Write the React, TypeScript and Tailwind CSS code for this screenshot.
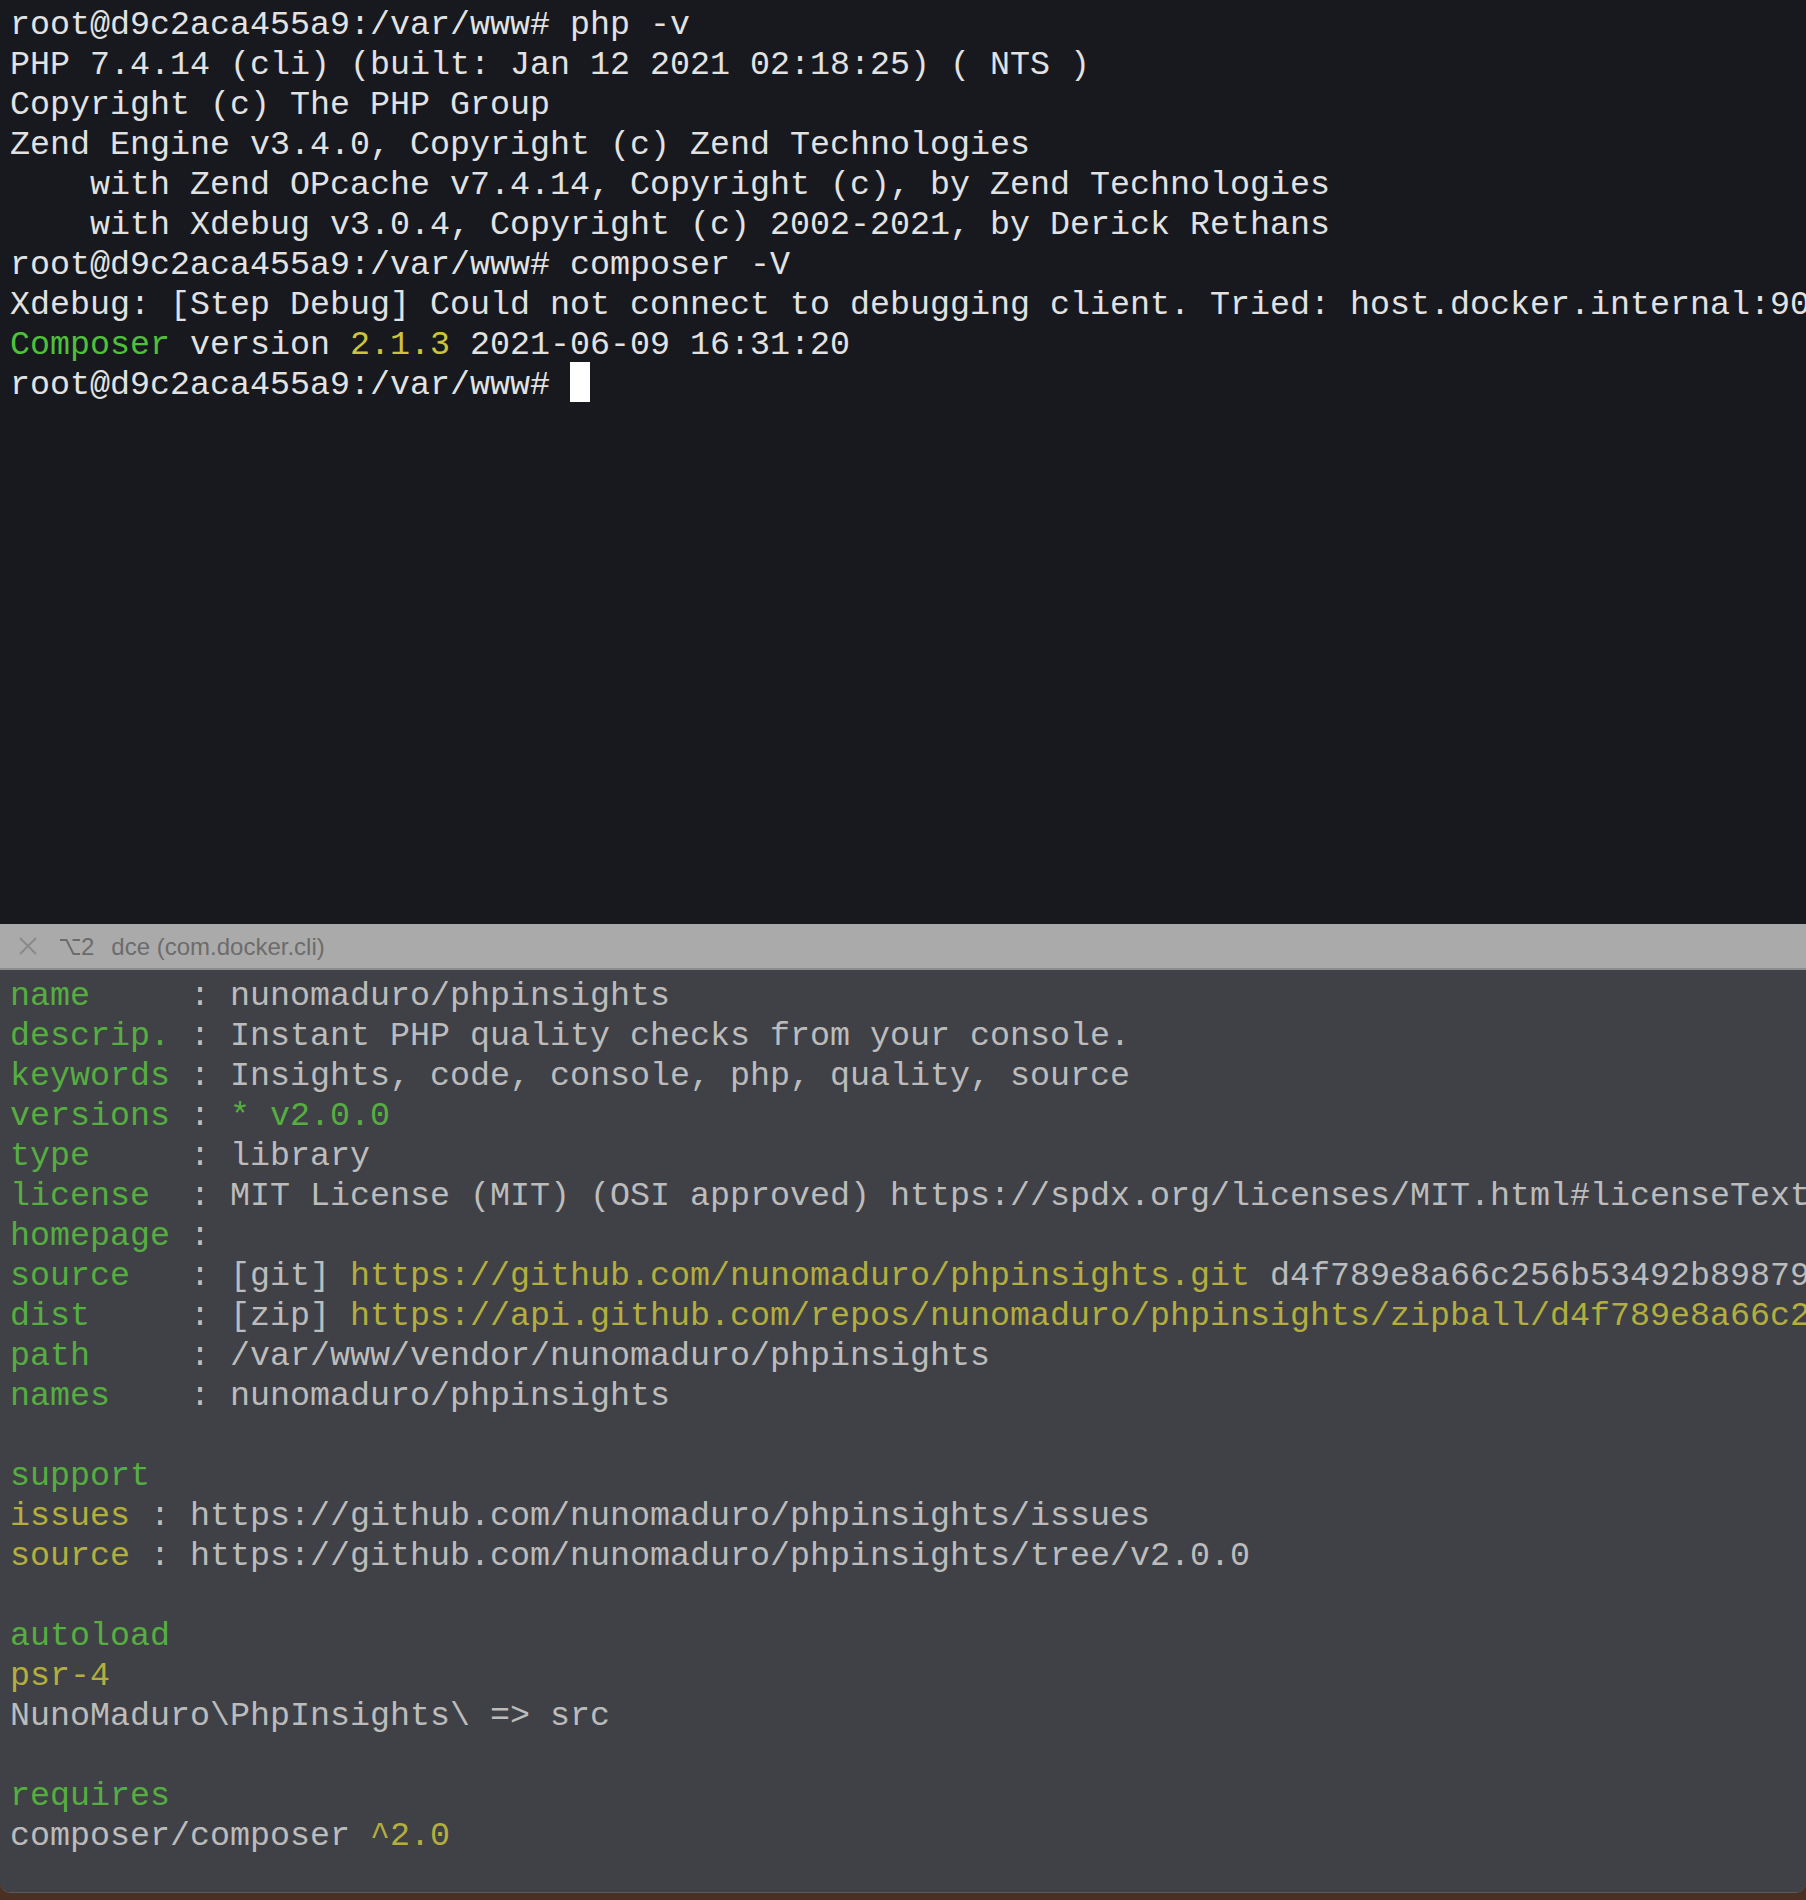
import React from "react";

const mono = { fontFamily: '"Liberation Mono", "DejaVu Sans Mono", monospace' };

const G1 = "text-[#4fc03a]";
const Y1 = "text-[#cdc43c]";
const G2 = "text-[#56ae41]";
const Y2 = "text-[#b3ae3e]";

function Line({ children }: { children?: React.ReactNode }) {
  return <div className="h-[40px] leading-[40px] whitespace-pre">{children ?? " "}</div>;
}

function KV({ k, children }: { k: string; children?: React.ReactNode }) {
  return (
    <Line>
      <span className={G2}>{k.padEnd(9, " ")}</span>
      {": "}
      {children}
    </Line>
  );
}

export default function App() {
  return (
    <div className="w-[1806px] h-[1900px] bg-[#4a3022] overflow-hidden">
      <div className="h-[1893px] rounded-b-[10px] overflow-hidden flex flex-col border-b border-[#5a5b5e]">
        {/* top pane */}
        <div
          className="h-[924px] bg-[#17191e] pt-[2px] pl-[10px] text-[33.33px] text-[#e2e2e2] overflow-hidden"
          style={mono}
        >
          <div className="relative top-[3px]">
            <Line>root@d9c2aca455a9:/var/www# php -v</Line>
            <Line>PHP 7.4.14 (cli) (built: Jan 12 2021 02:18:25) ( NTS )</Line>
            <Line>Copyright (c) The PHP Group</Line>
            <Line>Zend Engine v3.4.0, Copyright (c) Zend Technologies</Line>
            <Line>{"    with Zend OPcache v7.4.14, Copyright (c), by Zend Technologies"}</Line>
            <Line>{"    with Xdebug v3.0.4, Copyright (c) 2002-2021, by Derick Rethans"}</Line>
            <Line>root@d9c2aca455a9:/var/www# composer -V</Line>
            <Line>
              Xdebug: [Step Debug] Could not connect to debugging client. Tried: host.docker.internal:9003 (through xdebug.client_host/xdebug.client_port) :-(
            </Line>
            <Line>
              <span className={G1}>Composer</span> version <span className={Y1}>2.1.3</span> 2021-06-09 16:31:20
            </Line>
            <Line>
              {"root@d9c2aca455a9:/var/www# "}
              <span className="inline-block align-top w-[20px] h-[40px] bg-white relative -top-[3px]" />
            </Line>
          </div>
        </div>

        {/* tab bar */}
        <div className="h-[46px] bg-[#aaaaaa] border-b-2 border-[#8d8d8d] flex items-center shrink-0">
          <svg width="20" height="20" viewBox="0 0 20 20" className="ml-[18px]">
            <path d="M2 2 L18 18 M18 2 L2 18" stroke="#8a8a8a" strokeWidth="2" fill="none" />
          </svg>
          <div
            className="ml-[22px] flex items-center text-[24px] text-[#6c6c6c] pt-[2px]"
            style={{ fontFamily: '"Liberation Sans", Arial, sans-serif' }}
          >
            <svg width="20" height="18" viewBox="0 0 20 18" className="mr-[1px]">
              <path d="M0 2 H6.5 L13.5 16 H20 M12.5 2 H20" stroke="#6c6c6c" strokeWidth="2" fill="none" />
            </svg>
            <span>2</span>
            <span className="ml-[17px]">dce (com.docker.cli)</span>
          </div>
        </div>

        {/* bottom pane */}
        <div
          className="flex-1 bg-[#404146] pt-[6px] pl-[10px] text-[33.33px] text-[#bcbcbc] overflow-hidden"
          style={mono}
        >
          <KV k="name">nunomaduro/phpinsights</KV>
          <KV k="descrip.">Instant PHP quality checks from your console.</KV>
          <KV k="keywords">Insights, code, console, php, quality, source</KV>
          <KV k="versions">
            <span className={G2}>* v2.0.0</span>
          </KV>
          <KV k="type">library</KV>
          <KV k="license">MIT License (MIT) (OSI approved) https://spdx.org/licenses/MIT.html#licenseText</KV>
          <KV k="homepage" />
          <KV k="source">
            [git] <span className={Y2}>https://github.com/nunomaduro/phpinsights.git</span> d4f789e8a66c256b53492b8987947a2a0e0f33c1
          </KV>
          <KV k="dist">
            [zip] <span className={Y2}>https://api.github.com/repos/nunomaduro/phpinsights/zipball/d4f789e8a66c256b53492b8987947a2a0e0f33c1</span>
          </KV>
          <KV k="path">/var/www/vendor/nunomaduro/phpinsights</KV>
          <KV k="names">nunomaduro/phpinsights</KV>
          <Line />
          <Line>
            <span className={G2}>support</span>
          </Line>
          <Line>
            <span className={Y2}>issues</span> : https://github.com/nunomaduro/phpinsights/issues
          </Line>
          <Line>
            <span className={Y2}>source</span> : https://github.com/nunomaduro/phpinsights/tree/v2.0.0
          </Line>
          <Line />
          <Line>
            <span className={G2}>autoload</span>
          </Line>
          <Line>
            <span className={Y2}>psr-4</span>
          </Line>
          <Line>{"NunoMaduro\\PhpInsights\\ => src"}</Line>
          <Line />
          <Line>
            <span className={G2}>requires</span>
          </Line>
          <Line>
            composer/composer <span className={Y2}>^2.0</span>
          </Line>
        </div>
      </div>
    </div>
  );
}
